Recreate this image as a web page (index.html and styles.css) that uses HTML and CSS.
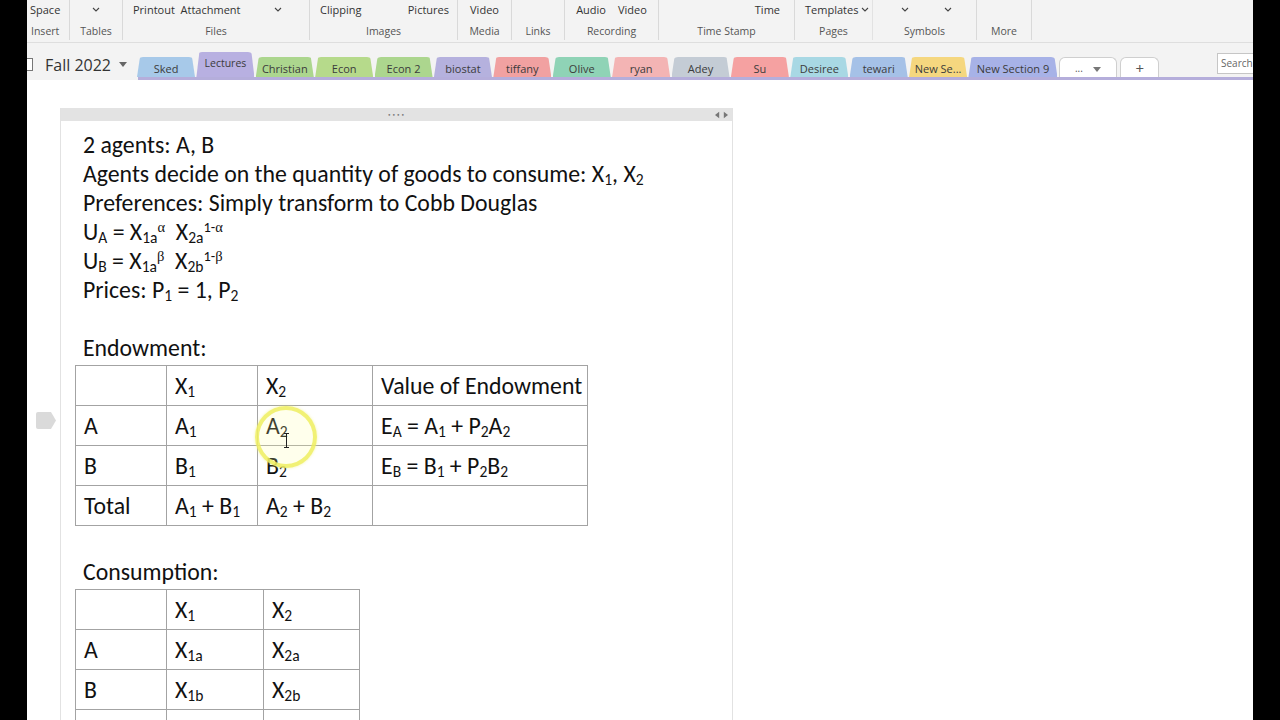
FILE: index.html
```html
<!DOCTYPE html>
<html>
<head>
<meta charset="utf-8">
<link rel="stylesheet" href="styles.css">
</head>
<body>
<div class="app">
  <div class="ribbon">
    <div class="grp g-insert"><div class="btns left"><span>Space</span></div><div class="lbl left">Insert</div></div>
    <div class="grp g-tables"><div class="btns center"><svg class="chev" viewBox="0 0 8 5"><path d="M1 1l3 3 3-3" /></svg></div><div class="lbl">Tables</div></div>
    <div class="grp g-files"><div class="btns files"><span>Printout&nbsp; Attachment</span><svg class="chev chev-files" viewBox="0 0 8 5"><path d="M1 1l3 3 3-3" /></svg></div><div class="lbl">Files</div></div>
    <div class="grp g-images"><div class="btns between images"><span>Clipping</span><span>Pictures</span></div><div class="lbl">Images</div></div>
    <div class="grp g-media"><div class="btns center"><span>Video</span></div><div class="lbl">Media</div></div>
    <div class="grp g-links"><div class="btns center"></div><div class="lbl">Links</div></div>
    <div class="grp g-rec"><div class="btns center rec"><span>Audio</span><span>Video</span></div><div class="lbl">Recording</div></div>
    <div class="grp g-time"><div class="btns end time"><span>Time</span></div><div class="lbl">Time Stamp</div></div>
    <div class="grp g-pages"><div class="btns left pages"><span>Templates</span><svg class="chev" viewBox="0 0 8 5"><path d="M1 1l3 3 3-3" /></svg></div><div class="lbl">Pages</div></div>
    <div class="grp g-sym"><div class="btns between sym"><svg class="chev" viewBox="0 0 8 5"><path d="M1 1l3 3 3-3" /></svg><svg class="chev" viewBox="0 0 8 5"><path d="M1 1l3 3 3-3" /></svg></div><div class="lbl">Symbols</div></div>
    <div class="grp g-more"><div class="btns center"></div><div class="lbl">More</div></div>
  </div>

  <div class="tabstrip">
    <div class="notebook">
      <span class="nb-icon"></span>
      <span class="nb-name">Fall 2022</span>
      <svg class="nb-caret" viewBox="0 0 8 5"><path d="M0 0h8l-4 5z" /></svg>
    </div>
    <div class="tabrow">
      <div class="tab c-sked">Sked</div>
      <div class="tab active c-lect">Lectures</div>
      <div class="tab c-green">Christian</div>
      <div class="tab c-green2">Econ</div>
      <div class="tab c-green">Econ 2</div>
      <div class="tab c-bio">biostat</div>
      <div class="tab c-tif">tiffany</div>
      <div class="tab c-olive">Olive</div>
      <div class="tab c-ryan">ryan</div>
      <div class="tab c-adey">Adey</div>
      <div class="tab c-su">Su</div>
      <div class="tab c-des">Desiree</div>
      <div class="tab c-tew">tewari</div>
      <div class="tab c-newse">New Se...</div>
      <div class="tab wide c-ns9">New Section 9</div>
      <div class="tab blank more-tab"><span class="ell">...</span><svg class="more-caret" viewBox="0 0 8 5"><path d="M0 0h8l-4 5z" /></svg></div>
      <div class="tab blank plus-tab">+</div>
      <div class="search">Search</div>
    </div>
  </div>

  <div class="page">
    <div class="handle"></div>
    <div class="note">
      <div class="note-bar">
        <span class="dots">••••</span>
        <span class="arrows"><svg viewBox="0 0 6 8"><path d="M5 0v8L0 4z" /></svg><svg viewBox="0 0 6 8"><path d="M1 0v8l5-4z" /></svg></span>
      </div>
      <div class="note-body">
        <p>2 agents: A, B</p>
        <p>Agents decide on the quantity of goods to consume: X<sub>1</sub>, X<sub>2</sub></p>
        <p>Preferences: Simply transform to Cobb Douglas</p>
        <p>U<sub>A</sub> = X<sub>1a</sub><sup class="gk">α</sup>&nbsp; X<sub>2a</sub><sup>1-<span class="gk">α</span></sup></p>
        <p>U<sub>B</sub> = X<sub>1a</sub><sup class="gk">β</sup>&nbsp; X<sub>2b</sub><sup>1-<span class="gk">β</span></sup></p>
        <p>Prices: P<sub>1</sub> = 1, P<sub>2</sub></p>
        <p>&nbsp;</p>
        <p class="tt">Endowment:</p>
        <table class="tbl endow">
          <tr><td class="w91"></td><td class="w91">X<sub>1</sub></td><td class="w115">X<sub>2</sub></td><td class="w215">Value of Endowment</td></tr>
          <tr><td>A</td><td>A<sub>1</sub></td><td>A<sub>2</sub></td><td>E<sub>A</sub> = A<sub>1</sub> + P<sub>2</sub>A<sub>2</sub></td></tr>
          <tr><td>B</td><td>B<sub>1</sub></td><td>B<sub>2</sub></td><td>E<sub>B</sub> = B<sub>1</sub> + P<sub>2</sub>B<sub>2</sub></td></tr>
          <tr><td>Total</td><td>A<sub>1</sub> + B<sub>1</sub></td><td>A<sub>2</sub> + B<sub>2</sub></td><td></td></tr>
        </table>
        <p class="gap">&nbsp;</p>
        <p class="tt">Consumption:</p>
        <table class="tbl cons">
          <tr><td class="w91"></td><td class="w97">X<sub>1</sub></td><td class="w96">X<sub>2</sub></td></tr>
          <tr><td>A</td><td>X<sub>1a</sub></td><td>X<sub>2a</sub></td></tr>
          <tr><td>B</td><td>X<sub>1b</sub></td><td>X<sub>2b</sub></td></tr>
          <tr><td>&nbsp;</td><td></td><td></td></tr>
        </table>
      </div>
    </div>
    <div class="pointer"></div>
    <svg class="ibeam" viewBox="0 0 7 15"><path d="M1 0.5h5M3.5 0.5v14M1 14.5h5" /></svg>
  </div>
</div>
</body>
</html>
```

FILE: styles.css
```css
* { box-sizing: border-box; }
html, body { margin: 0; padding: 0; }
body { background: #000; width: 1280px; height: 720px; overflow: hidden; }

.app {
  width: 1226px;
  height: 720px;
  margin: 0 auto;
  background: #fff;
  overflow: hidden;
  position: relative;
}

/* ---------- Ribbon ---------- */
.ribbon {
  height: 43px;
  background: #f3f3f3;
  border-bottom: 1px solid #dedede;
  box-shadow: 0 1px 2px rgba(0,0,0,0.06);
  display: flex;
  font-family: "Open Sans", "Noto Sans", sans-serif;
  font-size: 11px;
  color: #3a3a3a;
}
.grp {
  display: flex;
  flex-direction: column;
  border-right: 1px solid #d9d9d9;
  height: 40px;
}
.btns {
  height: 18px;
  flex: 0 0 18px;
  display: flex;
  align-items: center;
  font-size: 11px;
  color: #333;
}
.btns.left { justify-content: flex-start; padding-left: 3px; }
.btns.center { justify-content: center; }
.btns.between { justify-content: space-between; }
.btns.end { justify-content: flex-end; }
.lbl {
  flex: 0 0 22px;
  display: flex;
  align-items: flex-end;
  justify-content: center;
  padding-bottom: 2px;
  font-size: 10.5px;
  color: #555;
}
.lbl.left { justify-content: flex-start; padding-left: 4px; }

.g-insert { width: 43px; }
.g-tables { width: 53px; }
.g-files { width: 187px; }
.g-images { width: 148px; }
.g-media { width: 54px; }
.g-links { width: 53px; }
.g-rec { width: 94px; }
.g-time { width: 136px; }
.g-pages { width: 78px; border-right-color: #e2e2e2; }
.g-sym { width: 104px; }
.g-more { width: 55px; }

.files { padding-left: 10px; }
.chev-files { margin-left: 33px; }
.images { padding: 0 8px 0 10px; }
.rec { gap: 12px; }
.time { padding-right: 14px; }
.pages.left { padding-left: 10px; gap: 3px; }
.sym { padding: 0 24px 0 28px; }

.chev { width: 8px; height: 5px; }
.chev path { fill: none; stroke: #444; stroke-width: 1.1; }

/* ---------- Tab strip ---------- */
.tabstrip {
  height: 37px;
  background: #f3f3f3;
  display: flex;
  align-items: stretch;
}
.notebook {
  width: 111px;
  display: flex;
  align-items: center;
  padding-top: 6px;
  font-family: "Open Sans", "Noto Sans", sans-serif;
}
.nb-icon {
  width: 8px;
  height: 13px;
  border: 1px solid #777;
  border-left: none;
  margin-left: -2px;
  margin-right: 12px;
  background: #fff;
}
.nb-name { font-size: 16px; color: #333; }
.nb-caret { width: 8px; height: 5px; margin-left: 8px; }
.nb-caret path { fill: #666; }

.tabrow {
  flex: 1;
  display: flex;
  align-items: flex-end;
  border-bottom: 3px solid #b5aedb;
  position: relative;
}
.tab {
  flex: 0 0 58px;
  height: 20px;
  margin-right: 1.4px;
  display: flex;
  align-items: center;
  justify-content: center;
  padding-top: 3px;
  font-family: "Open Sans", "Noto Sans", sans-serif;
  font-size: 11px;
  color: #3b3b3b;
  clip-path: polygon(0 100%, 3px 0, calc(100% - 3px) 0, 100% 100%);
  border-radius: 6px 6px 0 0;
}
.tab:first-child { margin-left: -1px; }
.tab.active { height: 25px; align-items: flex-start; padding-top: 4px; font-size: 10.5px; }
.tab.wide { flex-basis: 89px; }
.c-sked { background: #a7c9e9; }
.c-lect { background: #b8b0e1; }
.c-green { background: #acd68e; }
.c-green2 { background: #b6da8b; }
.c-bio { background: #b5b1de; }
.c-tif { background: #f1a1a1; }
.c-olive { background: #8fd3b6; }
.c-ryan { background: #f3b4b4; }
.c-adey { background: #c4ccd5; }
.c-su { background: #f5a1a1; }
.c-des { background: #a8d8e4; }
.c-tew { background: #a5c1e7; }
.c-newse { background: #f5d77f; }
.c-ns9 { background: #a7b2e7; }
.tab.blank {
  background: #fff;
  clip-path: none;
  border: 1px solid #cfcfcf;
  border-bottom: none;
  color: #555;
}
.more-tab { flex-basis: 58px; gap: 10px; }
.ell { font-size: 10px; margin-top: -3px; }
.more-caret { width: 8px; height: 5px; }
.more-caret path { fill: #777; }
.plus-tab { flex-basis: 39px; margin-left: 2px; font-size: 15px; padding-top: 1px; }
.search {
  margin-left: auto;
  align-self: flex-start;
  margin-top: 10px;
  width: 36px;
  height: 21px;
  border: 1px solid #c6c6c6;
  border-right: none;
  background: #fff;
  font-family: "Open Sans", "Noto Sans", sans-serif;
  font-size: 10px;
  color: #666;
  padding: 2px 0 0 3px;
  overflow: hidden;
  white-space: nowrap;
}

/* ---------- Page ---------- */
.page {
  position: relative;
  height: 640px;
  padding-top: 28px;
  background: #fff;
}
.handle {
  position: absolute;
  left: 9px;
  top: 332px;
  width: 20px;
  height: 17px;
  background: #dadada;
  clip-path: polygon(0 0, 75% 0, 100% 50%, 75% 100%, 0 100%);
  border-radius: 2px;
}
.note {
  margin-left: 33px;
  width: 673px;
  height: 700px;
  border-left: 1px solid #e2e2e2;
  border-right: 1px solid #e2e2e2;
}
.note-bar {
  height: 13px;
  background: #e3e3e3;
  position: relative;
  display: flex;
  align-items: center;
  justify-content: center;
}
.dots { font-size: 6px; letter-spacing: 1px; color: #777; font-family: "DejaVu Sans", sans-serif; }
.arrows {
  position: absolute;
  right: 4px;
  top: 3px;
  display: flex;
  gap: 3px;
}
.arrows svg { width: 5px; height: 8px; }
.arrows path { fill: #777; }

.note-body {
  padding: 9px 0 0 14px;
  font-family: "Carlito", "Calibri", "Lato", sans-serif;
  font-size: 23.8px;
  line-height: 29px;
  color: #111;
}
.note-body p { margin: 0; padding-left: 8px; white-space: nowrap; }
.note-body p.tt { margin-bottom: 3px; }
.note-body p.gap { height: 31px; }
sub {
  font-size: 15.5px;
  vertical-align: -3px;
  line-height: 0;
}
sup {
  font-size: 14.5px;
  vertical-align: 8px;
  line-height: 0;
}
.gk { font-family: "Liberation Serif", "DejaVu Serif", serif; font-size: 14.5px; }

.tbl {
  border-collapse: collapse;
}
.tbl td {
  border: 1px solid #a3a3a3;
  height: 40px;
  padding: 0 4px 0 8px;
  vertical-align: middle;
  white-space: nowrap;
}
.w91 { width: 91px; }
.w97 { width: 97px; }
.w96 { width: 96px; }
.w115 { width: 115px; }
.w215 { width: 215px; }

.pointer {
  position: absolute;
  left: 228px;
  top: 326px;
  width: 62px;
  height: 62px;
  border-radius: 50%;
  border: 4px solid rgba(238, 238, 96, 0.85);
  background: rgba(255, 255, 160, 0.2);
  box-shadow: 0 0 3px rgba(240, 240, 120, 0.6);
}
.ibeam {
  position: absolute;
  left: 256px;
  top: 353px;
  width: 7px;
  height: 15px;
}
.ibeam path { fill: none; stroke: #222; stroke-width: 1; }
```
